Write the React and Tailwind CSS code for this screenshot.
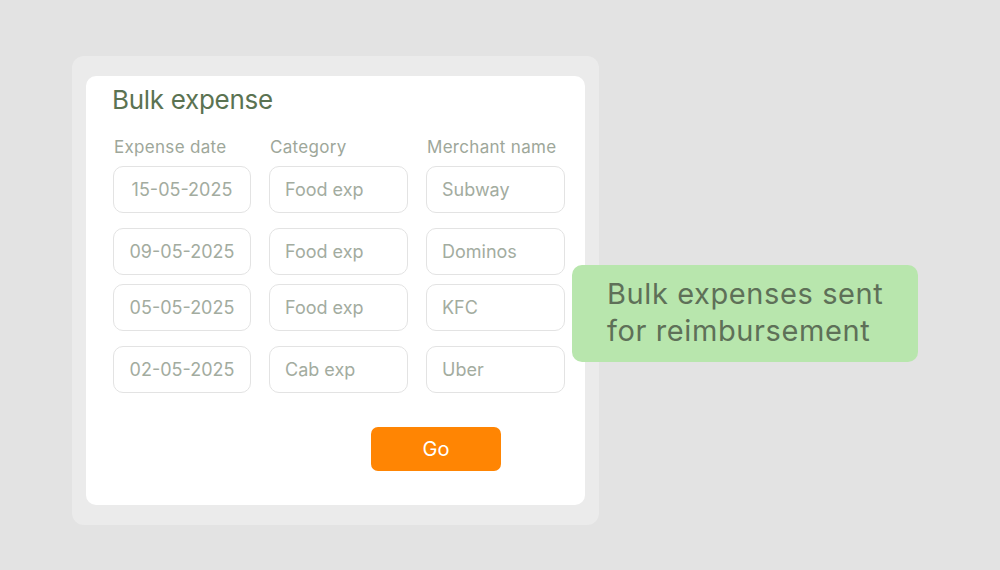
import React from "react";

const rows = [
  ["15-05-2025", "Food exp", "Subway", "mt-0"],
  ["09-05-2025", "Food exp", "Dominos", "mt-[15px]"],
  ["05-05-2025", "Food exp", "KFC", "mt-[9px]"],
  ["02-05-2025", "Cab exp", "Uber", "mt-[15px]"],
];

function Field({ children, center }) {
  return (
    <div
      className={`h-[47px] rounded-[10px] border-[1.5px] border-[#e3e3e3] bg-white flex items-center text-[18px] text-[#a3ac9f] ${
        center ? "justify-center" : "pl-[15px]"
      }`}
    >
      {children}
    </div>
  );
}

export default function App() {
  return (
    <div
      className="relative w-[1000px] h-[570px] bg-[#e3e3e3] overflow-hidden"
      style={{ fontFamily: "Inter, 'Noto Sans', sans-serif" }}
    >
      <div className="absolute left-[72px] top-[56px] w-[527px] h-[469px] rounded-[12px] bg-[#ebebeb] p-[14px] pt-[20px] pb-[20px]">
        <div className="w-full h-full rounded-[10px] bg-white pl-[27px] pt-[6px]">
          <div className="text-[26px] leading-[36px] text-[#5b7352] -ml-[1px] tracking-[-0.3px]">
            Bulk expense
          </div>
          <div className="grid grid-cols-[138px_139px_139px] gap-x-[18px] mt-[18px]">
            <div className="text-[17px] leading-[22px] text-[#9ea79a] pl-[1px] tracking-[0.3px]">Expense date</div>
            <div className="text-[17px] leading-[22px] text-[#9ea79a] pl-[1px] tracking-[0.3px]">Category</div>
            <div className="text-[17px] leading-[22px] text-[#9ea79a] pl-[1px] tracking-[0.3px]">Merchant name</div>
          </div>
          <div className="mt-[8px]">
            {rows.map(([d, c, m, mt]) => (
              <div key={d} className={`grid grid-cols-[138px_139px_139px] gap-x-[18px] ${mt}`}>
                <Field center>{d}</Field>
                <Field>{c}</Field>
                <Field>{m}</Field>
              </div>
            ))}
          </div>
          <button className="mt-[34px] ml-[258px] w-[130px] h-[44px] rounded-[7px] bg-[#ff8503] text-white text-[20px] flex items-center justify-center">
            Go
          </button>
        </div>
      </div>
      <div className="absolute left-[572px] top-[265px] w-[346px] h-[97px] rounded-[10px] bg-[#b8e6ad] pl-[35px] pt-[10px] text-[29px] leading-[37px] tracking-[0.6px] text-[#5e7058]">
        <div>Bulk expenses sent</div>
        <div>for reimbursement</div>
      </div>
    </div>
  );
}
